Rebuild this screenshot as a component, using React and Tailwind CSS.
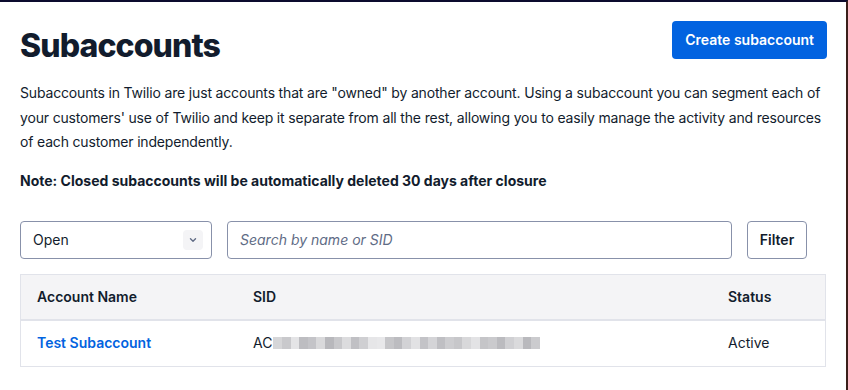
import { useState } from "react";

const sidBlocks = [
  "#d6d6d8", "#c9c9cc", "#e4e4e6", "#bdbdc1", "#c4c4c8", "#d9d9db", "#b8b8bc", "#c8c8cb",
  "#dcdcde", "#c0c0c4", "#cfcfd2", "#e6e6e8", "#e8e8ea", "#c6c6c9", "#bcbcc0", "#d2d2d5",
  "#e2e2e4", "#c3c3c7", "#d4d4d7", "#bfbfc3", "#cdcdd0", "#c7c7ca", "#d8d8da", "#e3e3e5",
  "#c5c5c8", "#cacacd", "#bbbbbf", "#d0d0d3", "#dadadc", "#b9b9bd", "#cbcbce",
];

const App = () => {
  const [status, setStatus] = useState("Open");
  const [search, setSearch] = useState("");

  return (
    <div className="w-[848px] h-[390px] overflow-hidden bg-white border-t-2 border-t-[#0c0b2e] border-r-2 border-r-[#3a1f1a] font-['Inter',sans-serif] text-[#121c2d]">
      <div className="pl-5 pr-[19px] pt-[19px]">
        <div className="flex items-start justify-between">
          <h1 className="mt-[5px] text-[32px] font-extrabold leading-[40px] tracking-[-0.9px]">Subaccounts</h1>
          <button className="h-[38px] px-[13px] rounded-[4px] bg-[#0263e0] text-white text-sm font-semibold">
            Create subaccount
          </button>
        </div>

        <p className="mt-[15px] text-sm leading-[24.5px] tracking-[-0.17px] whitespace-nowrap">
          Subaccounts in Twilio are just accounts that are "owned" by another account. Using a subaccount you can segment each of
          <br />
          your customers' use of Twilio and keep it separate from all the rest, allowing you to easily manage the activity and resources
          <br />
          of each customer independently.
        </p>

        <p className="mt-[14px] text-sm font-bold leading-6">
          Note: Closed subaccounts will be automatically deleted 30 days after closure
        </p>

        <div className="flex items-center gap-[15px] mt-7">
          <div className="w-[192px] h-[38px] rounded-[4px] border border-[#8891aa] flex items-center pl-3 pr-[8px]">
            <select
              value={status}
              onChange={(e) => setStatus(e.target.value)}
              className="appearance-none bg-transparent text-sm outline-none flex-1"
            >
              <option>Open</option>
              <option>Closed</option>
              <option>Suspended</option>
            </select>
            <span className="w-5 h-5 rounded-[4px] bg-[#f4f4f6] flex items-center justify-center">
              <svg width="8" height="6" viewBox="0 0 8 6" fill="none">
                <path d="M1.5 1.8 4 4.2 6.5 1.8" stroke="#606b85" strokeWidth="1.4" strokeLinecap="round" strokeLinejoin="round" />
              </svg>
            </span>
          </div>
          <input
            value={search}
            onChange={(e) => setSearch(e.target.value)}
            placeholder="Search by name or SID"
            className="w-[505px] h-[38px] rounded-[4px] border border-[#8891aa] px-3 text-sm outline-none placeholder:italic placeholder:text-[#606b85]"
          />
          <button className="w-[60px] h-[38px] rounded-[4px] border border-[#8891aa] text-sm font-semibold">
            Filter
          </button>
        </div>

        <div className="mt-[15px] w-[806px] border border-[#e1e3ea]">
          <div className="flex items-center h-[46px] bg-[#f4f4f6] border-b-2 border-b-[#e1e3ea] text-sm font-semibold">
            <div className="w-[232px] pl-4">Account Name</div>
            <div className="flex-1">SID</div>
            <div className="w-[97px]">Status</div>
          </div>
          <div className="flex items-center h-[45px] text-sm">
            <div className="w-[232px] pl-4 text-[#0263e0] font-semibold">Test Subaccount</div>
            <div className="flex-1 flex items-center">
              <span>AC</span>
              <span className="flex h-[12px] ml-[1px]">
                {sidBlocks.map((c, i) => (
                  <span key={i} className="w-[8.6px] h-full" style={{ backgroundColor: c }} />
                ))}
              </span>
            </div>
            <div className="w-[97px]">Active</div>
          </div>
        </div>
      </div>
    </div>
  );
};

export default App;
